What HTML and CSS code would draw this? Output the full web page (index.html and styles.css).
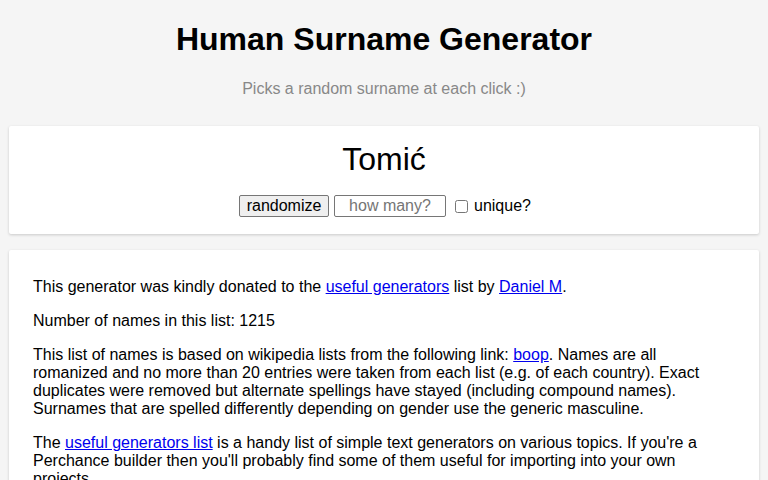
FILE: index.html
```html
<!DOCTYPE html>
<html lang="en">
<head>
<meta charset="utf-8">
<title>Human Surname Generator</title>
<link rel="stylesheet" href="styles.css">
</head>
<body>
<h1 class="title">Human Surname Generator</h1>
<p class="subtitle">Picks a random surname at each click :)</p>
<div class="card card-main">
  <div class="result">Tomić</div>
  <div class="controls">
    <button class="btn">randomize</button>
    <input class="count" type="text" placeholder="how many?">
    <label class="unique"><input class="check" type="checkbox">unique?</label>
  </div>
</div>
<div class="card card-info">
  <p>This generator was kindly donated to the <a href="#">useful generators</a> list by <a href="#">Daniel M</a>.</p>
  <p>Number of names in this list: 1215</p>
  <p>This list of names is based on wikipedia lists from the following link: <a href="#">boop</a>. Names are all romanized and no more than 20 entries were taken from each list (e.g. of each country). Exact duplicates were removed but alternate spellings have stayed (including compound names). Surnames that are spelled differently depending on gender use the generic masculine.</p>
  <p>The <a href="#">useful generators list</a> is a handy list of simple text generators on various topics. If you're a Perchance builder then you'll probably find some of them useful for importing into your own projects.</p>
</div>
</body>
</html>
```
FILE: styles.css
```css
html, body {
  margin: 0;
  padding: 0;
  background: #f5f5f5;
  font-family: "Liberation Sans", Arial, sans-serif;
  color: #000;
}
.title {
  font-size: 32px;
  font-weight: bold;
  text-align: center;
  margin: 21px 0 22px;
  line-height: 37px;
}
.subtitle {
  text-align: center;
  color: #888;
  font-size: 16px;
  line-height: 18px;
  margin: 0 0 28px;
}
.card {
  background: #fff;
  margin: 0 9px 16px;
  box-shadow: 0 1px 3px rgba(0, 0, 0, 0.18);
  border-radius: 2px;
}
.card-main {
  padding: 15px 24px 11px;
  text-align: center;
}
.result {
  font-size: 32px;
  line-height: 37px;
}
.controls {
  display: flex;
  justify-content: center;
  align-items: center;
  margin: 17px 0 6px;
  padding-left: 2px;
  height: 22px;
}
.btn {
  font-family: "Liberation Sans", Arial, sans-serif;
  font-size: 16px;
  height: 22px;
  width: 90px;
  padding: 0 6px;
  background: #efefef;
  border: 1px solid #767676;
  border-radius: 2px;
  color: #000;
}
.count {
  font-family: "Liberation Sans", Arial, sans-serif;
  font-size: 16px;
  width: 112px;
  height: 22px;
  box-sizing: border-box;
  margin-left: 5px;
  padding: 1px 2px;
  border: 1px solid #767676;
  border-radius: 2px;
  text-align: center;
}
.count::placeholder {
  color: #757575;
}
.unique {
  display: flex;
  align-items: center;
  font-size: 16px;
  margin-left: 5px;
}
.check {
  width: 13px;
  height: 13px;
  margin: 1px 6px 0 4px;
}
.card-info {
  padding: 12px 24px;
  font-size: 16px;
  line-height: 18px;
}
.card-info p {
  margin: 16px 0;
}
a {
  color: #0000ee;
}
```
